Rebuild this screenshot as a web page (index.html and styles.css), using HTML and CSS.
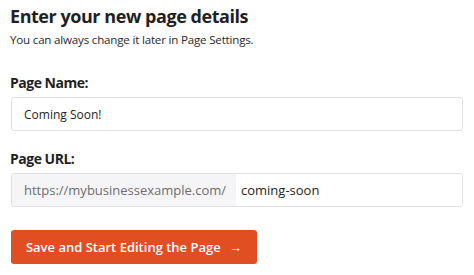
FILE: index.html
```html
<!DOCTYPE html>
<html lang="en">

<head>
    <meta charset="UTF-8">
    <meta name="viewport" content="width=device-width, initial-scale=1.0">
    <title>Page Details</title>
    <link rel="stylesheet" href="styles.css">
</head>

<body>
    <div class="wrapper">
        <h1 class="title">Enter your new page details</h1>
        <p class="sub">You can always change it later in Page Settings.</p>

        <div class="field">
            <label class="label" for="pageName">Page Name:</label>
            <input class="input" id="pageName" type="text" value="Coming Soon!">
        </div>

        <div class="field">
            <label class="label" for="pageUrl">Page URL:</label>
            <div class="urlBox">
                <span class="prefix">https://mybusinessexample.com/</span>
                <input class="slug" id="pageUrl" type="text" value="coming-soon">
            </div>
        </div>

        <button class="saveBtn">Save and Start Editing the Page <span class="arrow">&rarr;</span></button>
    </div>
</body>

</html>
```

FILE: styles.css
```css
body {
    margin: 0;
    background-color: white;
    font-family: "Open Sans", "Liberation Sans", sans-serif;
    color: #1f1f24;
}

.wrapper {
    padding: 4px 10px 0 11px;
    display: flex;
    flex-direction: column;
    align-items: flex-start;
}

.title {
    font-size: 18px;
    font-weight: 700;
    letter-spacing: -0.45px;
    margin: 0 0 0 -1px;
    line-height: 24px;
}

.sub {
    font-size: 11.6px;
    letter-spacing: -0.2px;
    margin: 4px 0 0 -1px;
    color: #2a2a30;
    line-height: 16px;
}

.field {
    width: 100%;
    margin-top: 26px;
    display: flex;
    flex-direction: column;
}

.field + .field {
    margin-top: 19px;
}

.label {
    font-size: 14px;
    font-weight: 700;
    letter-spacing: -0.5px;
    line-height: 18px;
    margin-left: -1px;
}

.input,
.urlBox {
    box-sizing: border-box;
    width: 452px;
    height: 34px;
    border: 1px solid #e2e2e6;
    border-radius: 3px;
    margin-top: 5px;
    font-family: inherit;
    font-size: 13px;
    color: #1f1f24;
}

.input {
    padding: 0 12px;
    font-size: 12px;
}

.urlBox {
    display: flex;
    overflow: hidden;
}

.prefix {
    background-color: #f5f5f7;
    color: #6d6d72;
    padding: 0 12px;
    width: 224px;
    box-sizing: border-box;
    display: flex;
    align-items: center;
}

.slug {
    border: none;
    outline: none;
    flex: 1;
    padding: 0 5px;
    font-family: inherit;
    font-size: 13px;
    color: #1f1f24;
}

.saveBtn {
    margin-top: 23px;
    width: 246px;
    height: 34px;
    border: none;
    border-radius: 3px;
    background-color: #e04e22;
    color: white;
    font-family: inherit;
    font-size: 13px;
    font-weight: 600;
    padding: 0;
}

.arrow {
    margin-left: 5px;
}
```
